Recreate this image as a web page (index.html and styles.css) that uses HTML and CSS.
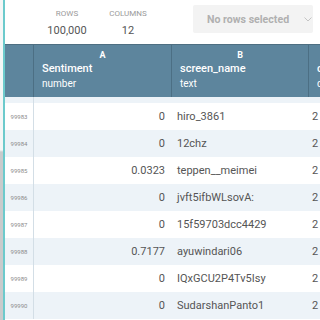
FILE: index.html
```html
<!DOCTYPE html>
<html>
<head>
<meta charset="utf-8">
<link rel="stylesheet" href="styles.css">
</head>
<body>
<div class="frame">
  <div class="edge"></div>
  <div class="accent"></div>
  <div class="main">
    <div class="topbar">
      <div class="stat stat-rows">
        <div class="stat-label">ROWS</div>
        <div class="stat-value">100,000</div>
      </div>
      <div class="stat stat-cols">
        <div class="stat-label">COLUMNS</div>
        <div class="stat-value">12</div>
      </div>
      <div class="select">
        <span class="select-text">No rows selected</span>
        <svg class="chev" width="8" height="5" viewBox="0 0 8 5"><path d="M0.5 0.5 L4 4 L7.5 0.5" fill="none" stroke="#c4c4c4" stroke-width="1"/></svg>
      </div>
    </div>
    <div class="grid">
      <div class="hrow">
        <div class="hcell idx"></div>
        <div class="hcell colA">
          <div class="letter">A</div>
          <div class="name">Sentiment</div>
          <div class="type">number</div>
        </div>
        <div class="hcell colB">
          <div class="letter">B</div>
          <div class="name">screen_name</div>
          <div class="type">text</div>
        </div>
        <div class="hcell colC">
          <div class="letter">C</div>
          <div class="name">created</div>
          <div class="type">date</div>
        </div>
      </div>
      <div class="row stripe partial"><div class="cell idx">99982</div><div class="cell num">0</div><div class="cell txt">x</div><div class="cell c3">2</div></div>
      <div class="row"><div class="cell idx">99983</div><div class="cell num">0</div><div class="cell txt">hiro_3861</div><div class="cell c3">2</div></div>
      <div class="row stripe"><div class="cell idx">99984</div><div class="cell num">0</div><div class="cell txt">12chz</div><div class="cell c3">2</div></div>
      <div class="row"><div class="cell idx">99985</div><div class="cell num">0.0323</div><div class="cell txt">teppen__meimei</div><div class="cell c3">2</div></div>
      <div class="row stripe"><div class="cell idx">99986</div><div class="cell num">0</div><div class="cell txt">jvft5ifbWLsovA:</div><div class="cell c3">2</div></div>
      <div class="row"><div class="cell idx">99987</div><div class="cell num">0</div><div class="cell txt">15f59703dcc4429</div><div class="cell c3">2</div></div>
      <div class="row stripe"><div class="cell idx">99988</div><div class="cell num">0.7177</div><div class="cell txt">ayuwindari06</div><div class="cell c3">2</div></div>
      <div class="row"><div class="cell idx">99989</div><div class="cell num">0</div><div class="cell txt">IQxGCU2P4Tv5Isy</div><div class="cell c3">2</div></div>
      <div class="row stripe"><div class="cell idx">99990</div><div class="cell num">0</div><div class="cell txt">SudarshanPanto1</div><div class="cell c3">2</div></div>
    </div>
  </div>
</div>
</body>
</html>
```
FILE: styles.css
```css
html, body {
  margin: 0;
  padding: 0;
  width: 320px;
  height: 320px;
  overflow: hidden;
  background: #ffffff;
  font-family: Roboto, "Liberation Sans", sans-serif;
}
.frame {
  display: flex;
  width: 320px;
  height: 320px;
}
.edge {
  width: 3px;
  flex: none;
  background: linear-gradient(#f4f6f6 0, #f4f6f6 150px, #c9cbcc 152px, #c9cbcc 100%);
}
.accent {
  width: 2px;
  flex: none;
  background: #6ccacc;
}
.main {
  flex: 1;
  min-width: 0;
  display: flex;
  flex-direction: column;
  overflow: hidden;
}
.topbar {
  flex: none;
  display: flex;
  align-items: flex-start;
  border-bottom: 1px solid #4e6f82;
  box-sizing: border-box;
  height: 45px;
}
.stat {
  display: flex;
  flex-direction: column;
  align-items: center;
}
.stat-rows { width: 48px; margin-left: 38px; }
.stat-cols { width: 50px; margin-left: 12px; }
.stat-label {
  font-size: 8px;
  color: #9a9a9a;
  margin-top: 9px;
  height: 10px;
  line-height: 10px;
}
.stat-value {
  font-size: 11px;
  color: #555;
  margin-top: 5px;
  line-height: 13px;
}
.select {
  margin-left: 40px;
  margin-top: 5px;
  width: 120px;
  height: 28px;
  background: #f3f3f3;
  border-radius: 2px;
  display: flex;
  align-items: center;
  box-sizing: border-box;
  padding-left: 14px;
  white-space: nowrap;
}
.select-text {
  font-size: 10.6px;
  font-weight: 700;
  color: #b0b0b0;
  white-space: nowrap;
}
.chev {
  margin-left: 15px;
  flex: none;
}
.grid {
  flex: 1;
  display: flex;
  flex-direction: column;
}
.hrow {
  display: grid;
  grid-template-columns: 29px 138px 137px 40px;
  height: 52px;
  background: #5d859d;
  flex: none;
}
.hcell {
  border-right: 1px solid #4c6f84;
  color: #ffffff;
  padding-left: 8px;
  box-sizing: border-box;
  overflow: hidden;
  white-space: nowrap;
}
.hcell.idx { padding: 0; }
.letter {
  font-size: 9px;
  font-weight: 700;
  text-align: center;
  margin-top: 5px;
  line-height: 10px;
  padding-right: 8px;
}
.name {
  font-size: 11px;
  font-weight: 500;
  line-height: 13px;
  margin-top: 2px;
}
.type {
  font-size: 10px;
  line-height: 12px;
  margin-top: 3px;
}
.row {
  display: grid;
  grid-template-columns: 29px 138px 137px 40px;
  height: 27px;
  flex: none;
  align-items: center;
  background: #ffffff;
}
.row.stripe { background: #edf3f8; }
.row.partial { height: 6px; overflow: hidden; }
.row.partial .cell { color: transparent; }
.cell {
  font-size: 11px;
  color: #555;
  white-space: nowrap;
  overflow: hidden;
  height: 100%;
  display: flex;
  align-items: center;
}
.cell.idx {
  font-size: 6px;
  color: #8a8a8a;
  justify-content: center;
  border-right: 1px solid #d3dee6;
  box-sizing: border-box;
}
.cell.num {
  justify-content: flex-end;
  padding-right: 7px;
  box-sizing: border-box;
}
.cell.txt {
  padding-left: 5px;
  box-sizing: border-box;
}
.cell.c3 {
  padding-left: 3px;
}
```
